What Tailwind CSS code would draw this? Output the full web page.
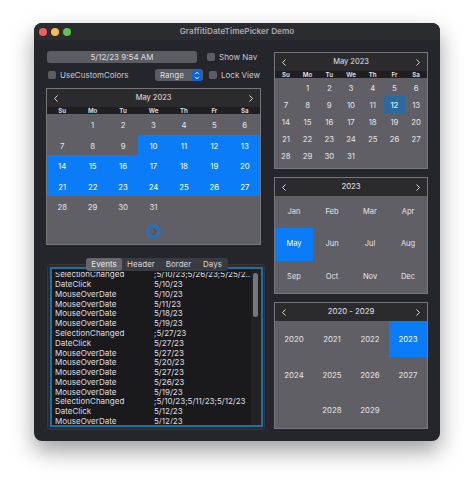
<!DOCTYPE html>
<html lang="en">
<head>
    <meta charset="UTF-8">
    <title>GraffitiDateTimePicker Demo</title>
    <script src="https://cdn.jsdelivr.net/npm/@tailwindcss/browser@4"></script>
</head>
<body class="bg-white font-['Inter',sans-serif] text-[#e4e4e6]">
<div class="pt-[23px] pl-[34px] w-[474px] h-[486px] overflow-hidden">
    <div class="w-[406px] h-[418px] rounded-lg bg-[#25262c] shadow-[0_10px_22px_rgba(0,0,0,0.38)] overflow-hidden">
        <!-- title bar -->
        <div class="h-[17px] bg-[#2b2c30] flex items-center px-[5px] gap-[4px]">
            <span class="w-[8px] h-[8px] rounded-full bg-[#ee5f5b]"></span>
            <span class="w-[8px] h-[8px] rounded-full bg-[#f5bd4f]"></span>
            <span class="w-[8px] h-[8px] rounded-full bg-[#5fc454]"></span>
            <span class="flex-1 text-center font-semibold text-[8.2px] text-[#a9a9ac] pr-[36px]">GraffitiDateTimePicker Demo</span>
        </div>
        <div class="flex pl-[12px] pt-[10px]">
            <!-- left column -->
            <div class="w-[228px]">
                <div class="flex items-center h-[13px]">
                    <div class="w-[150px] h-[12px] ml-[1px] rounded-[3px] bg-[#5c5d62] text-center text-[8px] leading-[12px] text-[#dcdcde]">5/12/23 9:54 AM</div>
                    <span class="w-[8px] h-[8px] ml-[10px] rounded-[2px] bg-[#5c5d62]"></span>
                    <span class="ml-[4px] text-[8px] text-[#c8c8ca]">Show Nav</span>
                </div>
                <div class="flex items-center h-[14px] mt-[5px]">
                    <span class="w-[8px] h-[8px] ml-[2px] rounded-[2px] bg-[#5c5d62]"></span>
                    <span class="ml-[4px] w-[95px] text-[8px] text-[#c8c8ca]">UseCustomColors</span>
                    <div class="w-[48px] h-[12px] rounded-[3px] bg-[#5c5d62] flex items-center justify-between">
                        <span class="ml-[5px] text-[8px] leading-[12px] text-[#dcdcde]">Range</span>
                        <span class="w-[10px] h-[11px] mr-[1px] rounded-[2px] bg-[#0a64d8] flex items-center justify-center">
                            <svg width="6" height="9" viewBox="0 0 6 9" fill="none" stroke="#fff" stroke-width="1"><path d="M1 3.2 3 1.2 5 3.2M1 5.8 3 7.8 5 5.8"/></svg>
                        </span>
                    </div>
                    <span class="w-[8px] h-[8px] ml-[6px] rounded-[2px] bg-[#5c5d62]"></span>
                    <span class="ml-[4px] text-[8px] text-[#c8c8ca]">Lock View</span>
                </div>
                <!-- main calendar -->
                <div class="w-[215px] h-[157px] mt-[6px] border border-[#77777b] bg-[#605f65]">
                    <div class="h-[18px] bg-[#2b2b2d] flex items-center justify-between px-[6px] text-[7.5px]">
                        <svg width="6" height="9" viewBox="0 0 6 9" fill="none" stroke="#ddd" stroke-width="1"><path d="M4.5 1.5 1.5 4.5 4.5 7.5"/></svg>
                        <span>May 2023</span>
                        <svg width="6" height="9" viewBox="0 0 6 9" fill="none" stroke="#ddd" stroke-width="1"><path d="M1.5 1.5 4.5 4.5 1.5 7.5"/></svg>
                    </div>
                    <div class="h-[7px] bg-[#1f1f21] grid grid-cols-7 text-center text-[6.2px] leading-[8px] font-semibold">
                        <span>Su</span><span>Mo</span><span>Tu</span><span>We</span><span>Th</span><span>Fr</span><span>Sa</span>
                    </div>
                    <div class="grid grid-cols-7 auto-rows-[20.5px] text-center text-[7.8px] leading-[22px]">
                        <span></span><span>1</span><span>2</span><span>3</span><span>4</span><span>5</span><span>6</span>
                        <span>7</span><span>8</span><span>9</span>
                        <span class="bg-[#0a7cf8] text-white">10</span><span class="bg-[#0a7cf8] text-white">11</span><span class="bg-[#0a7cf8] text-white">12</span><span class="bg-[#0a7cf8] text-white">13</span>
                        <span class="bg-[#0a7cf8] text-white">14</span><span class="bg-[#0a7cf8] text-white">15</span><span class="bg-[#0a7cf8] text-white">16</span><span class="bg-[#0a7cf8] text-white">17</span><span class="bg-[#0a7cf8] text-white">18</span><span class="bg-[#0a7cf8] text-white">19</span><span class="bg-[#0a7cf8] text-white">20</span>
                        <span class="bg-[#0a7cf8] text-white">21</span><span class="bg-[#0a7cf8] text-white">22</span><span class="bg-[#0a7cf8] text-white">23</span><span class="bg-[#0a7cf8] text-white">24</span><span class="bg-[#0a7cf8] text-white">25</span><span class="bg-[#0a7cf8] text-white">26</span><span class="bg-[#0a7cf8] text-white">27</span>
                        <span>28</span><span>29</span><span>30</span><span>31</span><span></span><span></span><span></span>
                    </div>
                    <div class="flex justify-center mt-[7px]">
                        <svg width="15" height="15" viewBox="0 0 15 15" fill="none"><circle cx="7.5" cy="7.5" r="6" stroke="#0a78ea" stroke-width="2"/><path d="M6.5 10.2C8.6 10.2 9.8 9 9.6 7.4 9.4 6 8.2 5.3 7 5.6" stroke="#3b4a60" stroke-width="1"/></svg>
                    </div>
                </div>
                <!-- log tabs -->
                <div class="relative w-[218px] h-[166px] mt-[19px] ml-[1px] rounded-[3px] bg-[#2b2c31] border border-[#35363b]">
                    <div class="absolute left-[38px] top-[-7px] z-10 w-[142px] h-[13px] rounded-[3px] bg-[#3a3b40] flex text-[8px] leading-[13px] text-center text-[#d6d6d8]">
                        <span class="w-[36px] rounded-[3px] bg-[#66676c] text-[#e8e8ea]">Events</span>
                        <span class="w-[38px]">Header</span>
                        <span class="w-[37px]">Border</span>
                        <span class="w-[31px]">Days</span>
                    </div>
                    <div class="relative ml-[2px] mt-[2px] w-[213px] h-[160px] border-2 border-[#1f6f9f] bg-[#1a1a1c] text-[8px] text-[#dedee0]">
                        <div class="relative mt-[3px] h-[152px] overflow-hidden">
                            <div class="absolute left-[3px] top-[-1.6px] right-[10px] grid grid-cols-[99px_1fr] auto-rows-[9.77px] leading-[9.77px] whitespace-nowrap">
                                <span>SelectionChanged</span><span>;5/10/23;5/26/23;5/25/2...</span>
                                <span>DateClick</span><span>5/10/23</span>
                                <span>MouseOverDate</span><span>5/10/23</span>
                                <span>MouseOverDate</span><span>5/11/23</span>
                                <span>MouseOverDate</span><span>5/18/23</span>
                                <span>MouseOverDate</span><span>5/19/23</span>
                                <span>SelectionChanged</span><span>;5/27/23</span>
                                <span>DateClick</span><span>5/27/23</span>
                                <span>MouseOverDate</span><span>5/27/23</span>
                                <span>MouseOverDate</span><span>5/20/23</span>
                                <span>MouseOverDate</span><span>5/27/23</span>
                                <span>MouseOverDate</span><span>5/26/23</span>
                                <span>MouseOverDate</span><span>5/19/23</span>
                                <span>SelectionChanged</span><span>;5/10/23;5/11/23;5/12/23</span>
                                <span>DateClick</span><span>5/12/23</span>
                                <span>MouseOverDate</span><span>5/12/23</span>
                            </div>
                        </div>
                        <div class="absolute right-0 top-0 bottom-0 w-[10px] bg-[#222224]">
                            <div class="w-[5px] h-[44px] mt-[4px] ml-[2px] rounded-full bg-[#77777a]"></div>
                        </div>
                    </div>
                </div>
            </div>
            <!-- right column -->
            <div class="w-[154px]">
                <div class="h-[117px] mt-[2px] border border-[#77777b] bg-[#605f65]">
                    <div class="h-[18px] bg-[#2b2b2d] flex items-center justify-between px-[6px] text-[7.5px]">
                        <svg width="6" height="9" viewBox="0 0 6 9" fill="none" stroke="#ddd" stroke-width="1"><path d="M4.5 1.5 1.5 4.5 4.5 7.5"/></svg>
                        <span>May 2023</span>
                        <svg width="6" height="9" viewBox="0 0 6 9" fill="none" stroke="#ddd" stroke-width="1"><path d="M1.5 1.5 4.5 4.5 1.5 7.5"/></svg>
                    </div>
                    <div class="h-[7px] bg-[#1f1f21] grid grid-cols-7 text-center text-[6.2px] leading-[8px] font-semibold">
                        <span>Su</span><span>Mo</span><span>Tu</span><span>We</span><span>Th</span><span>Fr</span><span>Sa</span>
                    </div>
                    <div class="grid grid-cols-7 auto-rows-[17px] text-center text-[7.8px] leading-[18px] mt-[1px]">
                        <span></span><span>1</span><span>2</span><span>3</span><span>4</span><span>5</span><span>6</span>
                        <span>7</span><span>8</span><span>9</span><span>10</span><span>11</span><span class="bg-[#2a6a9e] text-white">12</span><span>13</span>
                        <span>14</span><span>15</span><span>16</span><span>17</span><span>18</span><span>19</span><span>20</span>
                        <span>21</span><span>22</span><span>23</span><span>24</span><span>25</span><span>26</span><span>27</span>
                        <span>28</span><span>29</span><span>30</span><span>31</span>
                    </div>
                </div>
                <div class="h-[117px] mt-[8px] border border-[#77777b] bg-[#605f65]">
                    <div class="h-[18px] bg-[#2b2b2d] flex items-center justify-between px-[6px] text-[7.8px]">
                        <svg width="6" height="9" viewBox="0 0 6 9" fill="none" stroke="#ddd" stroke-width="1"><path d="M4.5 1.5 1.5 4.5 4.5 7.5"/></svg>
                        <span>2023</span>
                        <svg width="6" height="9" viewBox="0 0 6 9" fill="none" stroke="#ddd" stroke-width="1"><path d="M1.5 1.5 4.5 4.5 1.5 7.5"/></svg>
                    </div>
                    <div class="grid grid-cols-4 auto-rows-[32.4px] text-center text-[7.5px] leading-[32.4px]">
                        <span>Jan</span><span>Feb</span><span>Mar</span><span>Apr</span>
                        <span class="bg-[#0a7cf8] text-white">May</span><span>Jun</span><span>Jul</span><span>Aug</span>
                        <span>Sep</span><span>Oct</span><span>Nov</span><span>Dec</span>
                    </div>
                </div>
                <div class="h-[127px] mt-[8px] border border-[#77777b] bg-[#605f65]">
                    <div class="h-[18px] bg-[#2b2b2d] flex items-center justify-between px-[6px] text-[7.8px]">
                        <svg width="6" height="9" viewBox="0 0 6 9" fill="none" stroke="#ddd" stroke-width="1"><path d="M4.5 1.5 1.5 4.5 4.5 7.5"/></svg>
                        <span>2020 - 2029</span>
                        <svg width="6" height="9" viewBox="0 0 6 9" fill="none" stroke="#ddd" stroke-width="1"><path d="M1.5 1.5 4.5 4.5 1.5 7.5"/></svg>
                    </div>
                    <div class="grid grid-cols-4 auto-rows-[35.7px] text-center text-[7.8px] leading-[37px]">
                        <span>2020</span><span>2021</span><span>2022</span><span class="bg-[#0a7cf8] text-white">2023</span>
                        <span>2024</span><span>2025</span><span>2026</span><span>2027</span>
                        <span></span><span>2028</span><span>2029</span><span></span>
                    </div>
                </div>
            </div>
        </div>
    </div>
</div>
</body>
</html>
